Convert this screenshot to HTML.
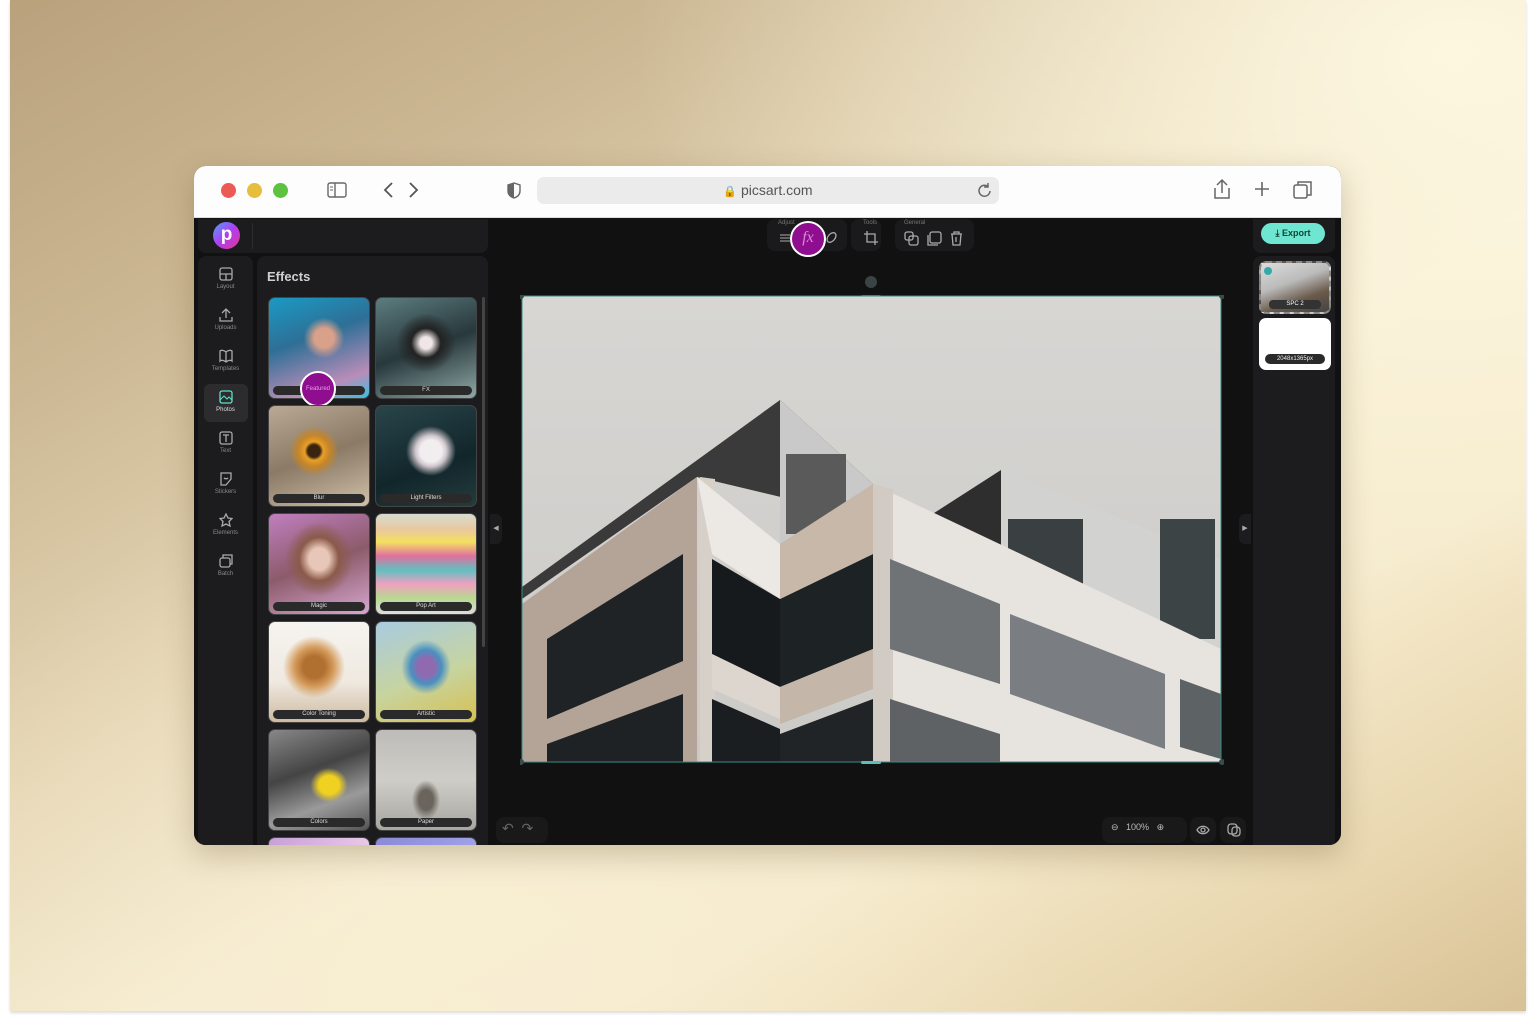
<!DOCTYPE html>
<html><head><meta charset="utf-8"><style>
*{margin:0;padding:0;box-sizing:border-box}
body{width:1536px;height:1016px;background:#fff;position:relative;overflow:hidden;font-family:"Liberation Sans",sans-serif}
.bg{position:absolute;left:10px;top:0;width:1516px;height:1011px;background:linear-gradient(150deg,#b9a17c 0%,#cdb995 22%,#e6d7b6 42%,#f6ecd0 58%,#f6ebcd 72%,#e8d6ae 88%,#d8c196 100%);box-shadow:0 2px 3px rgba(0,0,0,.15)}
.bg2{position:absolute;left:10px;top:0;width:1516px;height:1011px;background:radial-gradient(ellipse at 95% 5%,rgba(255,250,228,.9) 0,rgba(255,250,228,0) 40%),radial-gradient(ellipse at 30% 100%,rgba(250,240,215,.5) 0,rgba(250,240,215,0) 40%)}
.win{position:absolute;left:194px;top:166px;width:1147px;height:679px;border-radius:12px;overflow:hidden;background:#141414;box-shadow:0 10px 30px rgba(80,60,20,.25)}
.tb{position:absolute;left:0;top:0;width:100%;height:52px;background:#fdfdfd;border-bottom:1px solid #ddd}
.dot{position:absolute;top:17px;width:15px;height:15px;border-radius:50%}
.url{position:absolute;left:343px;top:11px;width:462px;height:27px;border-radius:7px;background:#ebebeb;font-size:14px;color:#555;text-align:center;line-height:27px}
.app{position:absolute;left:0;top:53px;width:100%;height:626px;background:#111112}
.p{position:absolute;background:#1c1c1e;border-radius:8px}
.nav{position:absolute;left:0;width:55px;text-align:center;color:#8a8a8a;font-size:6px}
.nav svg{display:block;margin:0 auto 3px}
.th{position:absolute;width:102px;height:102px;border-radius:7px;overflow:hidden;border:1px solid #444}
.lab{position:absolute;left:4px;right:4px;bottom:3px;height:9px;background:#2a2a2a;border-radius:5px;color:#ddd;font-size:6px;text-align:center;line-height:9px}
.tl{color:#777;font-size:6px;position:absolute}
.ic{stroke:#aaa;fill:none;stroke-width:1.3}
</style></head><body>
<div class="bg"></div><div class="bg2"></div>
<div class="win">
 <div class="tb">
  <div class="dot" style="left:27px;background:#ec5a55"></div>
  <div class="dot" style="left:53px;background:#e6bd3c"></div>
  <div class="dot" style="left:79px;background:#5cc23f"></div>
  <svg style="position:absolute;left:133px;top:16px" width="20" height="16"><rect x="1" y="1" width="18" height="14" rx="2" fill="none" stroke="#666" stroke-width="1.4"/><line x1="8" y1="1" x2="8" y2="15" stroke="#666" stroke-width="1.4"/><path d="M3 5h3M3 8h3" stroke="#666"/></svg>
  <svg style="position:absolute;left:188px;top:15px" width="40" height="18"><path d="M10 2L3 9l7 7M28 2l7 7-7 7" fill="none" stroke="#555" stroke-width="1.8"/></svg>
  <svg style="position:absolute;left:313px;top:16px" width="14" height="17"><path d="M7 1L1 3v6c0 4 3 6 6 7 3-1 6-3 6-7V3z" fill="none" stroke="#666" stroke-width="1.4"/><path d="M7 1v15c-3-1-6-3-6-7V3z" fill="#666"/></svg>
  <div class="url"><span style="font-size:11px">🔒</span> picsart.com</div>
  <svg style="position:absolute;left:783px;top:16px" width="16" height="17"><path d="M13 9a5.5 5.5 0 1 1-2-4.5M11 1v4h-4" fill="none" stroke="#666" stroke-width="1.5"/></svg>
  <svg style="position:absolute;left:1018px;top:12px" width="20" height="22"><path d="M10 2v13M5 7l5-5 5 5M3 10v10h14V10" fill="none" stroke="#666" stroke-width="1.5"/></svg>
  <svg style="position:absolute;left:1060px;top:15px" width="16" height="16"><path d="M8 1v14M1 8h14" stroke="#666" stroke-width="1.6"/></svg>
  <svg style="position:absolute;left:1099px;top:14px" width="20" height="20"><rect x="1" y="5" width="13" height="13" rx="2" fill="none" stroke="#666" stroke-width="1.5"/><path d="M5 5V2h13v13h-4" fill="none" stroke="#666" stroke-width="1.5"/></svg>
 </div>
 <div class="app">
  <div class="p" style="left:4px;top:0;width:290px;height:34px;border-radius:0 0 8px 8px"></div>
  <div style="position:absolute;left:19px;top:3px;width:27px;height:27px;border-radius:50%;background:linear-gradient(135deg,#4aa3ff,#b13cf0 50%,#e0398e);color:#fff;font-weight:bold;font-size:19px;text-align:center;line-height:25px">p</div>
  <div style="position:absolute;left:58px;top:4px;width:1px;height:26px;background:#2c2c2c"></div>
  <div class="p" style="left:4px;top:37px;width:55px;height:600px"></div>
  <div class="p" style="left:63px;top:37px;width:231px;height:600px"></div>
  <div style="position:absolute;left:10px;top:165px;width:44px;height:38px;background:#2c2c2e;border-radius:6px"></div>
  <div class="nav" style="left:4px;top:48px"><svg width="14" height="14"><rect x="1" y="1" width="12" height="12" rx="2" class="ic"/><path d="M1 7h12M7 7v6" class="ic"/></svg>Layout</div>
  <div class="nav" style="left:4px;top:89px"><svg width="14" height="14"><path d="M7 1v9M3 5l4-4 4 4M1 9v4h12V9" class="ic"/></svg>Uploads</div>
  <div class="nav" style="left:4px;top:130px"><svg width="14" height="14"><path d="M7 3C5 1 2 1 1 2v10c1-1 4-1 6 1 2-2 5-2 6-1V2c-1-1-4-1-6 1zM7 3v10" class="ic"/></svg>Templates</div>
  <div class="nav" style="left:4px;top:171px;color:#ddd"><svg width="14" height="14"><rect x="1" y="1" width="12" height="12" rx="2" stroke="#5fe0c8" fill="none" stroke-width="1.3"/><path d="M1 10l4-4 3 3 2-2 3 3" stroke="#5fe0c8" fill="none"/></svg>Photos</div>
  <div class="nav" style="left:4px;top:212px"><svg width="14" height="14"><rect x="1" y="1" width="12" height="12" rx="2" class="ic"/><path d="M4 4h6M7 4v7" class="ic"/></svg>Text</div>
  <div class="nav" style="left:4px;top:253px"><svg width="14" height="14"><path d="M2 1h10v6l-5 6H2z" class="ic"/><path d="M5 6c1 1 3 1 4 0" class="ic"/></svg>Stickers</div>
  <div class="nav" style="left:4px;top:294px"><svg width="14" height="14"><path d="M7 1l2 4 4 .5-3 3 1 4.5-4-2-4 2 1-4.5-3-3 4-.5z" class="ic"/></svg>Elements</div>
  <div class="nav" style="left:4px;top:335px"><svg width="14" height="14"><rect x="1" y="4" width="10" height="9" rx="2" class="ic"/><path d="M4 4V1h9v9h-2" class="ic"/></svg>Batch</div>
  <div style="position:absolute;left:73px;top:50px;color:#d0d0d0;font-size:13px;font-weight:bold">Effects</div>
  <div style="position:absolute;left:288px;top:78px;width:3px;height:350px;background:#444;border-radius:2px"></div>
  <div class="th" style="left:74px;top:78px;background:radial-gradient(circle at 55% 40%,#d9a08a 0 12%,transparent 25%),linear-gradient(160deg,#1a9ac4,#2e6f96 40%,#b98db9 80%,#3bbfe0)"><div class="lab">Featured</div></div>
  <div style="position:absolute;left:106px;top:152px;width:36px;height:36px;border-radius:50%;background:#8e0e8f;border:2px solid #fff;color:#e7a0e8;font-size:6px;text-align:center;line-height:32px">Featured</div>
  <div class="th" style="left:181px;top:78px;background:radial-gradient(circle at 50% 45%,#f0e6e6 0 8%,#222 20%,transparent 40%),linear-gradient(160deg,#5d7d80,#28383c 50%,#8fa9a6)"><div class="lab">FX</div></div>
  <div class="th" style="left:74px;top:186px;background:radial-gradient(circle at 45% 45%,#3a2410 0 8%,#e8a028 12%,#c68528 20%,transparent 32%),linear-gradient(160deg,#b9a995,#8a7a66 50%,#d0c0a8)"><div class="lab">Blur</div></div>
  <div class="th" style="left:181px;top:186px;background:radial-gradient(ellipse at 55% 45%,#f2eef0 0 14%,#cfc6cc 20%,transparent 32%),linear-gradient(160deg,#29454a,#11262b 60%,#243c3c)"><div class="lab">Light Filters</div></div>
  <div class="th" style="left:74px;top:294px;background:radial-gradient(ellipse at 50% 45%,#e9c7b8 0 14%,#8a5a4a 28%,transparent 48%),linear-gradient(160deg,#c07fc0,#8c5b6a 50%,#d6a6d0)"><div class="lab">Magic</div></div>
  <div class="th" style="left:181px;top:294px;background:linear-gradient(180deg,#d8dcd0 0,#e8c8a0 15%,#f4e060 28%,#e070a0 42%,#60c0c0 56%,#f0a0c0 70%,#b8d890 84%,#ddd)"><div class="lab">Pop Art</div></div>
  <div class="th" style="left:74px;top:402px;background:radial-gradient(ellipse at 45% 45%,#b07030 0 14%,#d49a5a 25%,transparent 40%),linear-gradient(180deg,#f6f4f0,#efe9e0 60%,#cdbba0)"><div class="lab">Color Toning</div></div>
  <div class="th" style="left:181px;top:402px;background:radial-gradient(ellipse at 50% 45%,#8f6ab0 0 12%,#4a90c0 22%,transparent 35%),linear-gradient(160deg,#a8cbe0,#c7d4a0 55%,#d6c050)"><div class="lab">Artistic</div></div>
  <div class="th" style="left:74px;top:510px;background:radial-gradient(ellipse at 60% 55%,#f0d020 0 12%,transparent 22%),linear-gradient(160deg,#888,#444 40%,#9a9a9a 70%,#555)"><div class="lab">Colors</div></div>
  <div class="th" style="left:181px;top:510px;background:radial-gradient(ellipse at 50% 70%,#6a645c 0 10%,transparent 20%),linear-gradient(180deg,#bdbcb8,#cfcdc8 50%,#a8a6a0)"><div class="lab">Paper</div></div>
  <div class="th" style="left:74px;top:618px;background:linear-gradient(90deg,#c8a0d8,#e8c8e8)"></div>
  <div class="th" style="left:181px;top:618px;background:linear-gradient(90deg,#8a8ad8,#a0a0e8)"></div>
  <div class="p" style="left:573px;top:0;width:80px;height:32px;background:#1a1a1c"></div>
  <div class="p" style="left:657px;top:0;width:30px;height:32px;background:#1a1a1c"></div>
  <div class="p" style="left:701px;top:0;width:79px;height:32px;background:#1a1a1c"></div>
  <div class="tl" style="left:584px;top:1px">Adjust</div><div class="tl" style="left:669px;top:1px">Tools</div><div class="tl" style="left:710px;top:1px">General</div>
  <svg style="position:absolute;left:585px;top:13px" width="12" height="12"><path d="M1 3h10M1 6h10M1 9h10" stroke="#aaa"/></svg>
  <svg style="position:absolute;left:631px;top:12px" width="13" height="13"><ellipse cx="6.5" cy="6.5" rx="3.5" ry="5.5" transform="rotate(40 6.5 6.5)" class="ic"/></svg>
  <div style="position:absolute;left:596px;top:2px;width:36px;height:36px;border-radius:50%;background:#8e0e8f;border:2px solid #fff;color:#d98ad9;font-family:'Liberation Serif',serif;font-style:italic;font-size:16px;text-align:center;line-height:30px">fx</div>
  <svg style="position:absolute;left:670px;top:12px" width="14" height="14"><path d="M3 0v11h11M0 3h11v11" class="ic"/></svg>
  <svg style="position:absolute;left:710px;top:12px" width="15" height="15"><rect x="1" y="1" width="8" height="8" rx="2" class="ic"/><rect x="5" y="5" width="9" height="9" rx="2" class="ic"/></svg>
  <svg style="position:absolute;left:733px;top:12px" width="15" height="15"><rect x="3" y="1" width="11" height="11" rx="2" class="ic"/><path d="M1 4v10h10" class="ic"/></svg>
  <svg style="position:absolute;left:756px;top:12px" width="13" height="15"><path d="M1 3h11M4 3V1h5v2M2 3l1 11h7l1-11M6 6v5" class="ic"/></svg>
  <div style="position:absolute;left:671px;top:57px;width:12px;height:12px;border-radius:50%;background:#3a4444"></div>
  <div style="position:absolute;left:667px;top:76px;width:20px;height:3px;border-radius:2px;background:#3a7a74"></div>
  <svg style="position:absolute;left:326px;top:76px" width="704" height="472" viewBox="520 296 704 472">
   <defs><linearGradient id="sk" x1="0" y1="0" x2="0" y2="1"><stop offset="0" stop-color="#d7d6d3"/><stop offset="1" stop-color="#cbcac7"/></linearGradient></defs>
   <rect x="522" y="297" width="699" height="466" fill="url(#sk)"/>
   <polygon points="522,588 780,401 873,485 873,520 697,478 522,600" fill="#3a3a3a"/>
   <polygon points="780,401 873,485 873,540 780,545" fill="#c9c9c9"/>
   <rect x="786" y="455" width="60" height="80" fill="#5a5a5a"/>
   <polygon points="917,525 1001,471 1001,570 917,560" fill="#2e2e2e"/>
   <polygon points="1001,471 1221,560 1221,660 1001,575" fill="#d2d2d0"/>
   <rect x="1008" y="520" width="75" height="70" fill="#3a3f41"/>
   <rect x="1160" y="520" width="55" height="120" fill="#3c4446"/>
   <polygon points="522,605 697,478 697,763 522,763" fill="#b3a497"/>
   <polygon points="700,478 715,480 715,763 700,763" fill="#d7d0c8"/>
   <polygon points="547,640 683,555 683,662 547,720" fill="#1f2325"/>
   <polygon points="547,745 683,695 683,763 547,763" fill="#1e2224"/>
   <polygon points="697,478 780,545 780,600 712,555" fill="#ece8e3"/>
   <polygon points="712,560 780,600 780,688 712,655" fill="#161a1c"/>
   <polygon points="780,600 873,555 873,650 780,688" fill="#1d2224"/>
   <polygon points="712,655 780,688 780,720 712,690" fill="#ddd6cf"/>
   <polygon points="780,688 873,650 873,690 780,725" fill="#c4b6a8"/>
   <polygon points="712,700 780,730 780,763 712,763" fill="#1a1e20"/>
   <polygon points="780,735 873,700 873,763 780,763" fill="#202426"/>
   <polygon points="780,545 873,485 873,555 780,600" fill="#c7b8aa"/>
   <polygon points="873,485 1221,650 1221,763 873,763" fill="#e7e3de"/>
   <polygon points="873,485 893,490 893,763 873,763" fill="#d2cbc3"/>
   <polygon points="890,560 1000,605 1000,685 890,650" fill="#6f7376"/>
   <polygon points="890,700 1000,735 1000,763 890,763" fill="#5e6265"/>
   <polygon points="1010,615 1165,675 1165,750 1010,695" fill="#7a7e82"/>
   <polygon points="1180,680 1221,695 1221,760 1180,748" fill="#5d6265"/>
   <rect x="522" y="297" width="699" height="466" fill="none" stroke="#3a8a84" stroke-width="1"/>
   <circle cx="521" cy="297" r="3" fill="#3d4a4a"/><circle cx="1222" cy="297" r="3" fill="#3d4a4a"/><circle cx="521" cy="763" r="3" fill="#3d4a4a"/><circle cx="1222" cy="763" r="3" fill="#3d4a4a"/>
  </svg>
  <div style="position:absolute;left:667px;top:542px;width:20px;height:3px;border-radius:2px;background:#5ac0b8"></div>
  <div style="position:absolute;left:296px;top:295px;width:12px;height:30px;background:#1c1c1e;border-radius:0 6px 6px 0;color:#aaa;font-size:7px;line-height:30px;text-align:center">◀</div>
  <div style="position:absolute;left:1045px;top:295px;width:12px;height:30px;background:#1c1c1e;border-radius:6px 0 0 6px;color:#aaa;font-size:7px;line-height:30px;text-align:center">▶</div>
  <div class="p" style="left:302px;top:598px;width:52px;height:26px;background:#19191a"></div>
  <div style="position:absolute;left:308px;top:601px;color:#666;font-size:14px">↶ &nbsp;↷</div>
  <div class="p" style="left:908px;top:598px;width:85px;height:26px;background:#19191a"></div>
  <div style="position:absolute;left:917px;top:603px;color:#bbb;font-size:9px">⊖ &nbsp; 100% &nbsp; ⊕</div>
  <div class="p" style="left:996px;top:598px;width:26px;height:26px;background:#19191a"></div>
  <svg style="position:absolute;left:1002px;top:606px" width="14" height="10"><path d="M1 5c3-5 9-5 12 0-3 5-9 5-12 0z" class="ic"/><circle cx="7" cy="5" r="2" class="ic"/></svg>
  <div class="p" style="left:1026px;top:598px;width:26px;height:26px;background:#19191a"></div>
  <svg style="position:absolute;left:1033px;top:604px" width="14" height="14"><rect x="1" y="1" width="9" height="10" rx="3" class="ic"/><rect x="5" y="4" width="8" height="9" rx="3" class="ic"/></svg>
  <div class="p" style="left:1059px;top:0;width:82px;height:34px;border-radius:0 0 8px 8px"></div>
  <div style="position:absolute;left:1067px;top:4px;width:64px;height:21px;border-radius:11px;background:#6fe6d2;color:#143;font-size:9px;font-weight:bold;text-align:center;line-height:21px">⤓ Export</div>
  <div class="p" style="left:1059px;top:37px;width:82px;height:600px"></div>
  <div style="position:absolute;left:1065px;top:42px;width:72px;height:53px;border-radius:7px;border:2px dashed #888;background:linear-gradient(160deg,#ddd 0,#bbb 40%,#6a5a4a 70%,#444)"><div style="position:absolute;left:3px;top:4px;width:8px;height:8px;border-radius:50%;background:#3aa;"></div><div style="position:absolute;left:8px;right:8px;bottom:3px;height:9px;background:#333;border-radius:4px;color:#fff;font-size:6px;text-align:center;line-height:9px">SPC 2</div></div>
  <div style="position:absolute;left:1065px;top:99px;width:72px;height:52px;border-radius:7px;background:#fff"><div style="position:absolute;left:6px;right:6px;bottom:6px;height:10px;background:#2a2a2a;border-radius:5px;color:#eee;font-size:6px;text-align:center;line-height:10px">2048x1365px</div></div>
 </div>
</div>
</body></html>
